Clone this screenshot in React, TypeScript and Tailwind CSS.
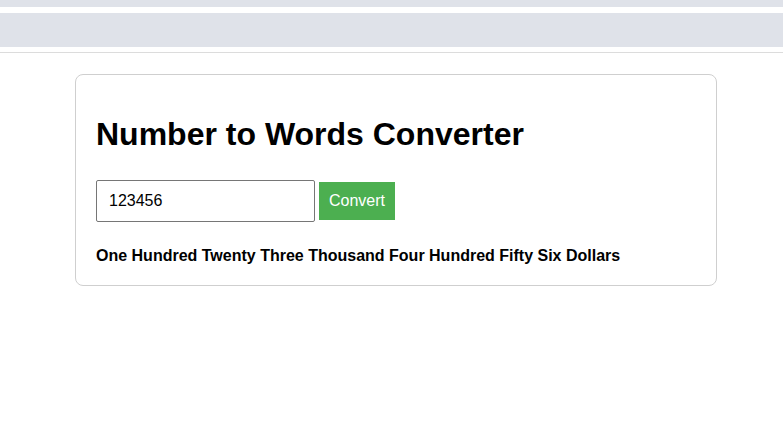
import React, { useState } from "react";

const ones = ["", "One", "Two", "Three", "Four", "Five", "Six", "Seven", "Eight", "Nine", "Ten", "Eleven", "Twelve", "Thirteen", "Fourteen", "Fifteen", "Sixteen", "Seventeen", "Eighteen", "Nineteen"];
const tens = ["", "", "Twenty", "Thirty", "Forty", "Fifty", "Sixty", "Seventy", "Eighty", "Ninety"];

function chunk(n: number): string {
  const parts: string[] = [];
  if (n >= 100) {
    parts.push(ones[Math.floor(n / 100)], "Hundred");
    n = n % 100;
  }
  if (n >= 20) {
    parts.push(tens[Math.floor(n / 10)]);
    if (n % 10) parts.push(ones[n % 10]);
  } else if (n > 0) {
    parts.push(ones[n]);
  }
  return parts.join(" ");
}

function toWords(value: string): string {
  const n = parseInt(value, 10);
  if (isNaN(n)) return "";
  if (n === 0) return "Zero Dollars";
  const scales = ["", "Thousand", "Million", "Billion"];
  let rest = n;
  let i = 0;
  const out: string[] = [];
  while (rest > 0 && i < scales.length) {
    const c = rest % 1000;
    if (c) out.unshift(chunk(c) + (scales[i] ? " " + scales[i] : ""));
    rest = Math.floor(rest / 1000);
    i++;
  }
  return out.join(" ") + " Dollars";
}

export default function App() {
  const [value, setValue] = useState("123456");
  const [result, setResult] = useState(toWords("123456"));

  return (
    <div className="min-h-screen bg-white font-['Liberation_Sans',Arial,sans-serif] text-black">
      <div className="h-[7px] bg-[#dfe2e9]" />
      <div className="h-[6px]" />
      <div className="h-[34px] bg-[#dfe2e9]" />
      <div className="h-[6px] border-b border-[#dcdcdc]" />
      <div className="pt-[21px]">
        <div className="ml-[75px] w-[642px] rounded-lg border border-[#cfcfcf] p-5">
          <h1 className="mt-[21px] text-[32px] font-bold leading-[37px]">
            Number to Words Converter
          </h1>
          <div className="mt-[27px] flex items-center gap-1">
            <input
              value={value}
              onChange={(e) => setValue(e.target.value)}
              className="h-[42px] w-[219px] rounded-[2px] border border-[#767676] px-3 text-base outline-none"
            />
            <button
              onClick={() => setResult(toWords(value))}
              className="h-[38px] bg-[#4caf50] px-[10px] text-base text-white"
            >
              Convert
            </button>
          </div>
          <div className="mt-[25px] text-base font-bold leading-[18px]">{result}</div>
        </div>
      </div>
    </div>
  );
}
